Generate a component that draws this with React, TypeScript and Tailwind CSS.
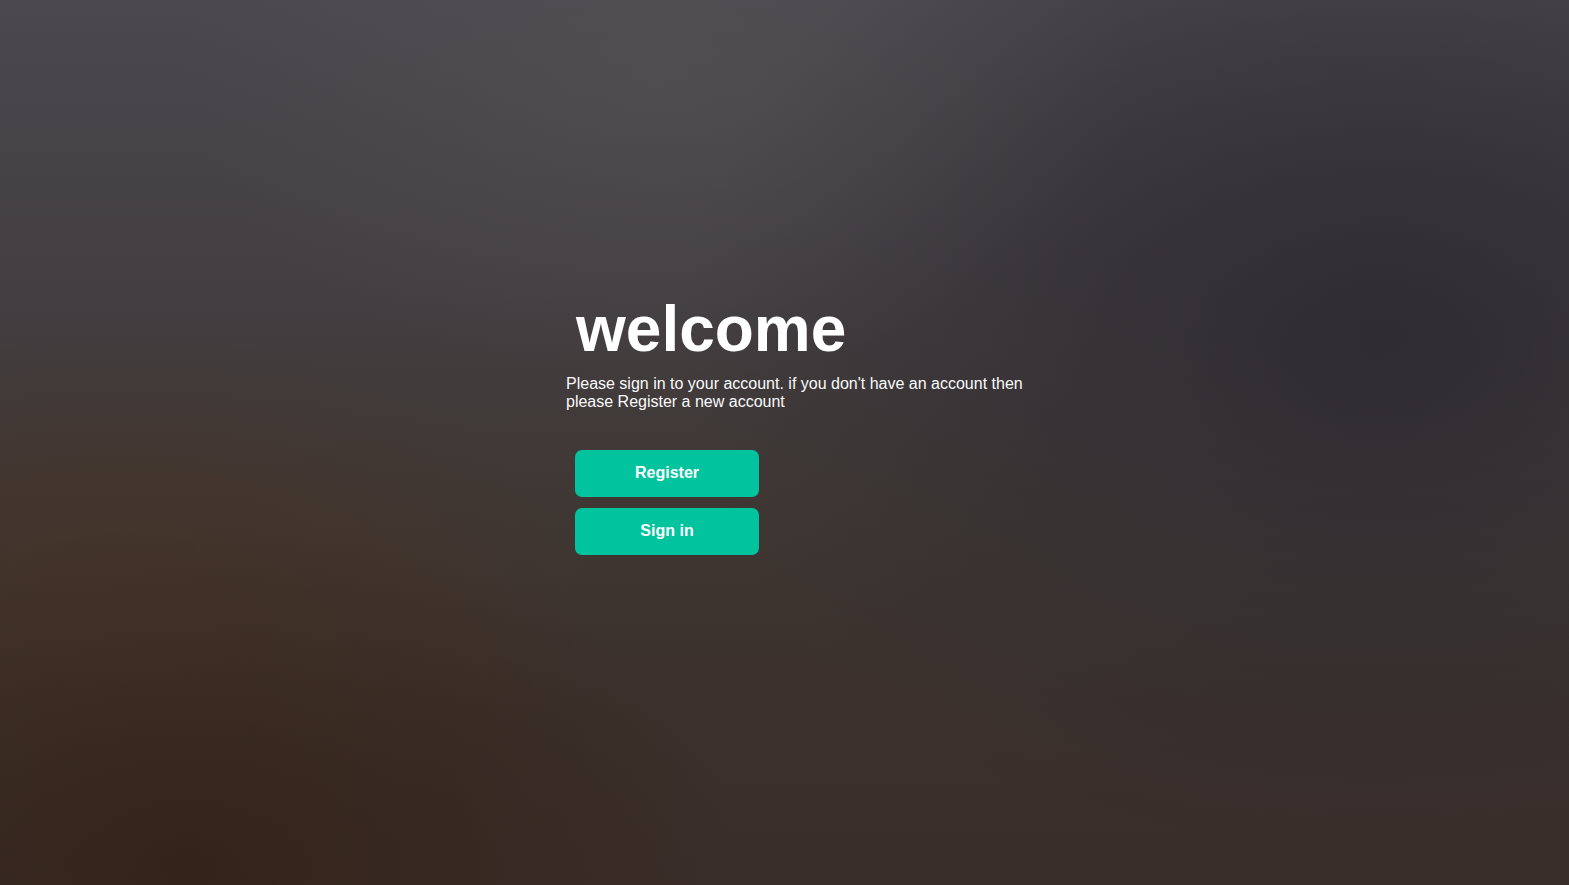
import React from 'react';

const Welcome = () => {
  return (
    <div
      className="min-h-screen w-full flex items-center font-['Liberation_Sans',Arial,sans-serif] text-white
        bg-[radial-gradient(ellipse_30%_35%_at_42%_8%,#57545680,transparent),radial-gradient(ellipse_45%_60%_at_88%_38%,#2f2c32,transparent),radial-gradient(ellipse_35%_40%_at_12%_98%,#34231a,transparent),radial-gradient(ellipse_30%_30%_at_8%_68%,#45342a,transparent),linear-gradient(to_bottom,#4b494e_0%,#433f43_30%,#3f3733_58%,#3b302b_80%,#3a2e2a_100%)]"
    >
      <div className="flex flex-col pl-[566px] pb-[39px]">
        <h1 className="ml-[10px] text-[64px] font-bold leading-[74px]">welcome</h1>
        <p className="mt-[9px] w-[470px] text-base leading-[18px] text-gray-50">
          Please sign in to your account. if you don't have an account then please Register a new account
        </p>

        <div className="mt-[39px] ml-[9px] flex flex-col gap-[11px]">
          <button
            type="button"
            className="w-[184px] h-[47px] rounded-[7px] bg-[#01c39d] text-base font-bold text-white"
          >
            Register
          </button>
          <button
            type="button"
            className="w-[184px] h-[47px] rounded-[7px] bg-[#01c39d] text-base font-bold text-white"
          >
            Sign in
          </button>
        </div>
      </div>
    </div>
  );
};

export default function App() {
  return <Welcome />;
}
